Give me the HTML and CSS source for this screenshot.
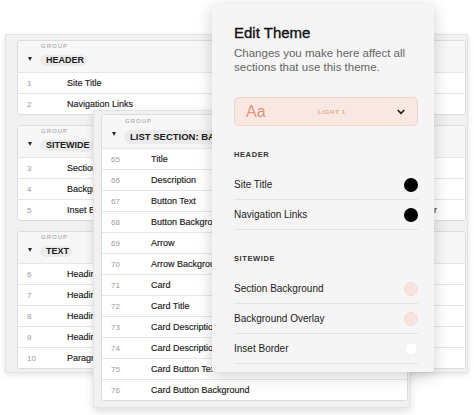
FILE: index.html
```html
<!DOCTYPE html>
<html>
<head>
<meta charset="utf-8">
<link rel="stylesheet" href="styles.css">
</head>
<body>
<div class="stage">

  <div class="win win-a">
    <div class="card">
      <div class="ghead">
        <span class="tri"></span>
        <div class="gcol"><span class="glabel">GROUP</span><span class="pill">HEADER</span></div>
      </div>
      <div class="row"><span class="num">1</span><span class="name">Site Title</span></div>
      <div class="row"><span class="num">2</span><span class="name">Navigation Links</span></div>
    </div>
    <div class="card">
      <div class="ghead">
        <span class="tri"></span>
        <div class="gcol"><span class="glabel">GROUP</span><span class="pill">SITEWIDE</span></div>
      </div>
      <div class="row"><span class="num">3</span><span class="name">Section Background</span></div>
      <div class="row"><span class="num">4</span><span class="name">Background Overlay</span></div>
      <div class="row"><span class="num">5</span><span class="name">Inset Border</span><span class="val">Inset Border</span></div>
    </div>
    <div class="card">
      <div class="ghead">
        <span class="tri"></span>
        <div class="gcol"><span class="glabel">GROUP</span><span class="pill">TEXT</span></div>
      </div>
      <div class="row"><span class="num">6</span><span class="name">Heading 1</span></div>
      <div class="row"><span class="num">7</span><span class="name">Heading 2</span></div>
      <div class="row"><span class="num">8</span><span class="name">Heading 3</span></div>
      <div class="row"><span class="num">9</span><span class="name">Heading 4</span></div>
      <div class="row"><span class="num">10</span><span class="name">Paragraph 1</span></div>
    </div>
  </div>

  <div class="win win-b">
    <div class="card">
      <div class="ghead big">
        <span class="tri"></span>
        <div class="gcol"><span class="glabel">GROUP</span><span class="pill">LIST SECTION: BANNER SLIDESHOW</span></div>
      </div>
      <div class="row"><span class="num">65</span><span class="name">Title</span></div>
      <div class="row"><span class="num">66</span><span class="name">Description</span></div>
      <div class="row"><span class="num">67</span><span class="name">Button Text</span></div>
      <div class="row"><span class="num">68</span><span class="name">Button Background</span></div>
      <div class="row"><span class="num">69</span><span class="name">Arrow</span></div>
      <div class="row"><span class="num">70</span><span class="name">Arrow Background</span></div>
      <div class="row"><span class="num">71</span><span class="name">Card</span></div>
      <div class="row"><span class="num">72</span><span class="name">Card Title</span></div>
      <div class="row"><span class="num">73</span><span class="name">Card Description</span></div>
      <div class="row"><span class="num">74</span><span class="name">Card Description Link</span></div>
      <div class="row"><span class="num">75</span><span class="name">Card Button Text</span></div>
      <div class="row"><span class="num">76</span><span class="name">Card Button Background</span></div>
    </div>
  </div>

  <div class="win theme">
    <h1 class="title">Edit Theme</h1>
    <p class="sub">Changes you make here affect all sections that use this theme.</p>
    <div class="dd">
      <span class="aa">Aa</span>
      <span class="tag">LIGHT 1</span>
      <svg class="chev" width="8" height="6" viewBox="0 0 8 6"><polyline points="1.2,1.5 4,4.3 6.8,1.5" fill="none" stroke="#222" stroke-width="1.7" stroke-linecap="round" stroke-linejoin="round"/></svg>
    </div>
    <div class="sect">HEADER</div>
    <div class="trow"><span>Site Title</span><span class="dot black"></span></div>
    <div class="trow"><span>Navigation Links</span><span class="dot black"></span></div>
    <div class="sect">SITEWIDE</div>
    <div class="trow"><span>Section Background</span><span class="dot pink"></span></div>
    <div class="trow"><span>Background Overlay</span><span class="dot pink"></span></div>
    <div class="trow"><span>Inset Border</span><span class="dot white"></span></div>
  </div>

</div>
</body>
</html>
```

FILE: styles.css
```css
* { box-sizing: border-box; }
html, body { margin: 0; padding: 0; background: #fff; }
body { font-family: "Liberation Sans", Arial, sans-serif; color: #1f1f1f; }
.stage { position: relative; width: 474px; height: 415px; overflow: hidden; background: #fff; }

.win { position: absolute; }

.win-a {
  left: 5px; top: 34px; width: 463px; height: 339px;
  background: #f1f1f1;
  border: 1px solid #e3e3e3;
  box-shadow: 0 2px 6px rgba(0,0,0,0.10);
  padding: 5px 1px 0 11px;
  display: flex; flex-direction: column; gap: 10px;
  overflow: hidden;
}
.win-b {
  left: 93px; top: 110px; width: 317px; height: 298px;
  background: #f1f1f1;
  border: 1px solid #e3e3e3;
  box-shadow: 0 3px 8px rgba(0,0,0,0.14);
  padding: 3px 1px 0 7px;
  display: flex; flex-direction: column;
  overflow: hidden;
}

.card {
  background: #fff;
  border: 1px solid #dcdcdc;
  border-radius: 3px;
  overflow: hidden;
  flex: none;
}
.ghead {
  height: 31px;
  background: #f7f7f7;
  display: flex;
  padding: 2px 0 0 10px;
}
.tri {
  width: 0; height: 0;
  border-left: 2.6px solid transparent;
  border-right: 2.6px solid transparent;
  border-top: 4px solid #2a2a2a;
  margin-top: 14px;
}
.gcol { margin-left: 8px; display: flex; flex-direction: column; align-items: flex-start; }
.glabel { font-size: 6px; line-height: 7px; letter-spacing: 1px; color: #9a9a9a; margin-left: 1px; }
.pill {
  margin-top: 5px;
  background: #ebebeb;
  border-radius: 6px;
  padding: 0 3px 0 6px;
  font-size: 9px; line-height: 11px; font-weight: 700; color: #1c1c1c;
  white-space: nowrap;
}
.ghead.big { height: 33px; padding-top: 3px; }
.ghead.big .tri { margin-top: 14px; }
.ghead.big .pill { margin-top: 5px; font-size: 9.5px; line-height: 14px; padding: 0 6px 0 6px; border-radius: 7px; }

.row {
  height: 21px;
  border-top: 1px solid #e6e6e6;
  display: grid;
  grid-template-columns: 40px 321px auto;
  align-items: center;
  padding-left: 9px;
  font-size: 9px;
  white-space: nowrap;
}
.num { font-size: 8px; color: #9b9b9b; }
.name { color: #1a1a1a; -webkit-text-stroke: 0.15px #1a1a1a; }
.val { color: #1a1a1a; }

.theme {
  left: 212px; top: 4px; width: 222px; height: 368px;
  background: #f5f5f5;
  border-radius: 3px;
  box-shadow: 0 4px 16px rgba(0,0,0,0.18), 0 0 2px rgba(0,0,0,0.06);
  padding: 20px 16px 0 22px;
}
.title { margin: 0; font-size: 15px; line-height: 17px; font-weight: 400; color: #111; -webkit-text-stroke: 0.35px #111; }
.sub { margin: 5px 0 0; font-size: 11.5px; line-height: 14px; color: #666; }
.dd {
  margin-top: 23px;
  height: 29px;
  background: #f9e7e1;
  border: 1px solid #f1d3c8;
  border-radius: 5px;
  display: flex; align-items: center;
  padding: 0 12px 0 11px;
}
.aa { width: 72px; font-size: 16px; color: #e3937d; }
.tag { flex: 1; font-size: 6px; font-weight: 700; letter-spacing: 0.7px; color: #e2a392; }
.chev { display: block; }
.sect {
  margin-top: 24px; margin-bottom: 10px;
  font-size: 7.5px; line-height: 10px; font-weight: 700; letter-spacing: 0.6px; color: #333;
}
.trow {
  height: 30px;
  border-bottom: 1px solid #e3e3e3;
  display: flex; align-items: center; justify-content: space-between;
  font-size: 10px; color: #222;
}
.dot { width: 14px; height: 14px; border-radius: 50%; }
.dot.black { background: #000; }
.dot.pink { background: #f8e4dc; border: 1px solid #f3ddd4; }
.dot.white { background: #fff; border: 1px solid #ececec; }
```
